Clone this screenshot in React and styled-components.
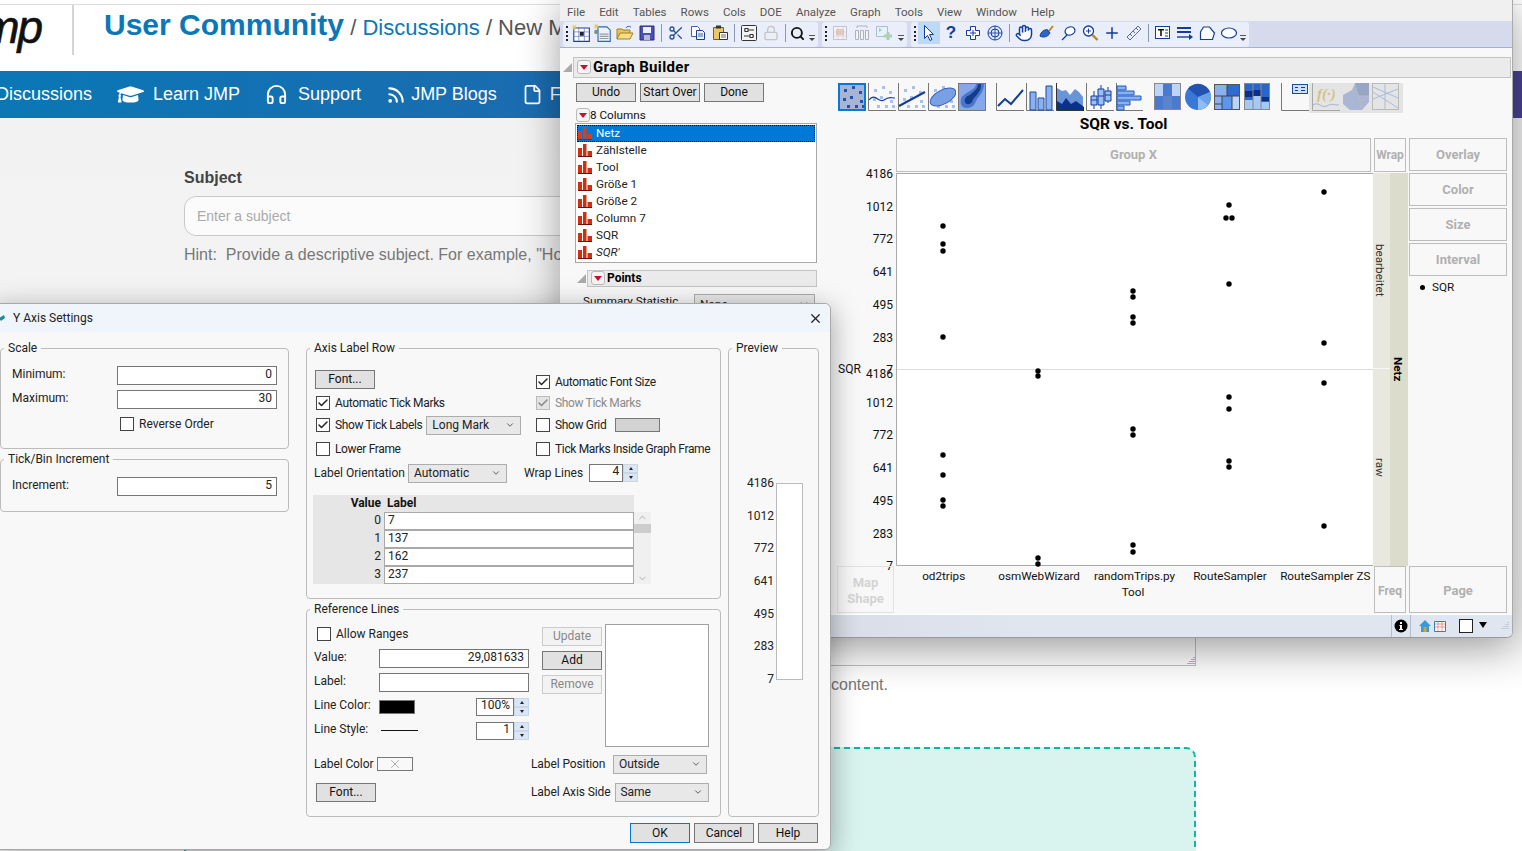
import React from "react";
import styled, { createGlobalStyle } from "styled-components";
import { Check, ChevronDown, ChevronUp, File, Hand, Headphones, Lock, Plus, Rss, Scissors, Search, X } from "lucide-react";
import { FaGraduationCap } from "react-icons/fa";

const GlobalStyle = createGlobalStyle`
  html, body { margin: 0; padding: 0; background: #fff; }
  * { box-sizing: border-box; }
`;

/* ---------- web page behind the windows ---------- */

const Desktop = styled.div`
  position: relative;
  width: 1522px;
  height: 851px;
  overflow: hidden;
  font-family: "Liberation Sans", Arial, sans-serif;
`;

const Header = styled.header`
  display: flex;
  height: 67px;
  margin-top: 4px;
  border-top: 1px solid #ddd;
  background: #fff;
`;

const LogoCell = styled.div`
  width: 74px;
  height: 50px;
  border-right: 2px solid #d4d4d4;
  overflow: hidden;
`;

const LogoText = styled.div`
  margin: -3px 0 0 -27px;
  font-size: 46px;
  line-height: 50px;
  font-style: italic;
  letter-spacing: -2px;
  color: #111;
  -webkit-text-stroke: 0.6px #111;
`;

const Crumbs = styled.div`
  margin: 1px 0 0 30px;
  white-space: nowrap;
  font-size: 22px;
  line-height: 38px;
  color: #555;
`;

const CrumbHome = styled.b`
  font-size: 30px;
  color: #0a78b8;
`;

const CrumbLink = styled.span`
  color: #0a78b8;
`;

const Nav = styled.nav`
  display: flex;
  align-items: center;
  height: 47px;
  margin-left: -4px;
  color: #fff;
  font-size: 18px;
  white-space: nowrap;
  background: linear-gradient(90deg, #0a77b5 0, #1a6cb0 540px, #4b4291 1526px);
`;

const NavItem = styled.span`
  display: flex;
  align-items: center;
  gap: ${(p) => p.$gap || 9}px;
  margin-right: 25px;
`;

const Main = styled.main`
  height: 733px;
  padding: 50px 0 0 184px;
  background: linear-gradient(#f2f2f2 0, #f5f5f5 520px, #fff 575px);
`;

const Column = styled.div`
  width: 1012px;
`;

const SubjectLabel = styled.div`
  font-size: 16px;
  line-height: 20px;
  font-weight: bold;
  color: #444;
`;

const SubjectInput = styled.input`
  display: block;
  width: 100%;
  height: 40px;
  margin-top: 8px;
  padding: 0 12px;
  border: 1px solid #c8c8c8;
  border-radius: 12px;
  background: #fbfbfb;
  font: 14px "Liberation Sans", Arial, sans-serif;
  &::placeholder { color: #aaa; opacity: 1; }
`;

const HintText = styled.div`
  margin-top: 9px;
  font-size: 16px;
  line-height: 19px;
  color: #777;
  white-space: pre;
`;

const EditorBox = styled.div`
  position: relative;
  height: 356px;
  margin-top: 46px;
  border: 1px solid #bbb;
`;

const ResizeGrip = styled.svg`
  position: absolute;
  right: 0;
  bottom: 0;
`;

const ContentHint = styled(HintText)`
  width: 704px;
  text-align: right;
`;

const TipBox = styled.div`
  height: 200px;
  margin-top: 53px;
  border: 2px dashed #12b5a5;
  border-radius: 10px;
  background: #d9f3ef;
`;

/* ---------- JMP window ---------- */

const JmpWindow = styled.section`
  position: absolute;
  left: 560px;
  top: 0;
  width: 953px;
  height: 638px;
  display: flex;
  flex-direction: column;
  overflow: hidden;
  background: #f8f8f8;
  border-right: 1px solid #aaa;
  border-bottom: 1px solid #999;
  border-bottom-right-radius: 6px;
  font-family: Roboto, "Liberation Sans", sans-serif;
  font-size: 11.7px;
  color: #111;
  box-shadow: 0 8px 40px rgba(0, 0, 0, 0.38);
`;

const MenuBar = styled.div`
  display: flex;
  gap: 14.1px;
  height: 21px;
  padding: 5px 0 0 7px;
  line-height: 14px;
  font-size: 11.5px;
  color: #555;
  background: #f0f0f0;
`;

const ToolBand = styled.div`
  display: flex;
  gap: 4px;
  height: 27px;
  padding: 1px 0 0 3px;
  background: #d5dbed;
  border-bottom: 1px solid #a9b1d2;
`;

const ToolGroup = styled.div`
  display: flex;
  align-items: center;
  width: ${(p) => p.$w}px;
  height: 25px;
  padding: 0 0 3px 2px;
  border-radius: 3px;
  background: #e9eefa;
`;

const Grip = styled.i`
  width: 2px;
  height: 15px;
  margin: 0 2px 0 1px;
  border-left: 2px dotted #222;
`;

const ToolSlot = styled.span`
  display: flex;
  align-items: center;
  justify-content: center;
  width: ${(p) => p.$w || 22}px;
  height: 22px;
  color: #1d4aa0;
  opacity: ${(p) => (p.$faded ? 0.35 : 1)};
  background: ${(p) => (p.$active ? "#bcd9f5" : "transparent")};
`;

const HelpGlyph = styled.b`
  font-size: 17px;
  color: #123d9c;
  font-family: "Liberation Sans", sans-serif;
`;

const ToolSep = styled.i`
  width: 1px;
  height: 18px;
  margin: 0 3px;
  background: #8d98b4;
`;

const Overflow = styled.i`
  width: 6px;
  height: 7px;
  margin: 10px 3px 0 auto;
  border-top: 1px solid #555;
  &::after {
    content: "";
    display: block;
    margin-top: 2px;
    border-left: 3px solid transparent;
    border-right: 3px solid transparent;
    border-top: 3px solid #444;
  }
`;

const OutlineRow = styled.div`
  display: flex;
  align-items: center;
  width: ${(p) => (p.$w ? `${p.$w}px` : "auto")};
  margin: ${(p) => p.$margin};
`;

const Twist = styled.i`
  flex: none;
  width: 0;
  height: 0;
  margin-right: 1px;
  border-left: 9px solid transparent;
  border-bottom: 9px solid #aaa;
`;

const OutlineBar = styled.div`
  display: flex;
  align-items: center;
  flex: 1;
  height: ${(p) => p.$h}px;
  padding: 0 0 1px 3px;
  border: 1px solid #c4c4c4;
  background: #ebebeb;
  font-weight: bold;
  font-size: ${(p) => p.$size}px;
  letter-spacing: ${(p) => p.$spacing || 0}px;
  color: #000;
`;

const RedMenu = styled.i`
  flex: none;
  display: flex;
  align-items: center;
  justify-content: center;
  width: 14px;
  height: 14px;
  margin-right: 2px;
  border: 1px solid #b9b9b9;
  border-radius: 3px;
  background: #f4f4f4;
  &::after {
    content: "";
    border-left: 4px solid transparent;
    border-right: 4px solid transparent;
    border-top: 5px solid #c8102e;
  }
`;

const Workspace = styled.div`
  display: flex;
  margin-top: 5px;
`;

const LeftPane = styled.div`
  flex: none;
  width: 278px;
  height: 240px;
  padding-left: 16px;
`;

const ButtonRow = styled.div`
  display: flex;
  gap: 4px;
`;

const ColumnsHead = styled.div`
  display: flex;
  align-items: center;
  height: 16px;
  margin-top: 5px;
  i { margin-right: 0; }
`;

const ListBox = styled.ul`
  width: 242px;
  height: 140px;
  margin: 0 0 0 -1px;
  padding: 1px;
  list-style: none;
  border: 1px solid #a8a8a8;
  background: #fff;
`;

const ListItem = styled.li`
  display: flex;
  align-items: center;
  gap: 4px;
  height: 17px;
  padding: 0 0 1px 1px;
  font-style: ${(p) => (p.$italic ? "italic" : "normal")};
  color: ${(p) => (p.$selected ? "#fff" : "#222")};
  background: ${(p) => (p.$selected ? "#0078d7" : "transparent")};
  outline: ${(p) => (p.$selected ? "1px dotted #111" : "none")};
  outline-offset: -1px;
`;

const SummaryRow = styled.div`
  display: grid;
  grid-template-columns: 111px 121px;
  margin: 7px 0 0 7px;
`;

const RightPane = styled.div`
  flex: 1;
  min-width: 0;
`;

const GraphIconRow = styled.div`
  display: flex;
  height: 30px;
`;

const GraphIconGroup = styled.div`
  display: flex;
  gap: 2px;
  margin-left: ${(p) => p.$left || 0}px;
  padding: ${(p) => (p.$off ? "0 3px" : 0)};
  height: ${(p) => (p.$off ? 30 : 28)}px;
  background: ${(p) => (p.$off ? "#e4e4e4" : "transparent")};
`;

const GraphIcon = styled.span`
  display: block;
  width: 28px;
  height: 28px;
  background: ${(p) => (p.$selected ? "#a8b4d4" : "transparent")};
  outline: ${(p) => (p.$selected ? "2px solid #0a78d4" : "none")};
  outline-offset: -2px;
  opacity: ${(p) => (p.$off ? 0.55 : 1)};
  svg { display: block; }
`;

const GraphTitle = styled.h2`
  margin: 0;
  height: 25px;
  padding: 3px 0 0 1px;
  width: 570px;
  text-align: center;
  font-size: 15.5px;
  line-height: 17px;
  font-weight: bold;
  color: #000;
`;

const GraphGrid = styled.div`
  display: grid;
  grid-template-columns: 58px 477px 35px 99px;
  grid-template-rows: 35px 393px 47px;
`;

const DropZone = styled.div`
  display: flex;
  align-items: center;
  justify-content: center;
  margin: ${(p) => p.$margin || 0};
  padding-top: ${(p) => p.$top || 0}px;
  height: ${(p) => (p.$h ? `${p.$h}px` : "auto")};
  border: 1px solid ${(p) => (p.$light ? "#e2e2e2" : "#bdbdbd")};
  color: ${(p) => (p.$light ? "#d4d4d4" : "#b0b0b0")};
  font-size: 13px;
  font-weight: bold;
  line-height: 16px;
  text-align: center;
`;

const NarrowZone = styled(DropZone)`
  font-size: 12px;
`;

const PlotSvg = styled.svg`
  grid-column: 1 / 3;
  grid-row: 2;
  overflow: visible;
  text {
    font-family: Roboto, "Liberation Sans", sans-serif;
    font-size: 12px;
    fill: #111;
  }
`;

const StripPane = styled.div`
  display: grid;
  grid-template-columns: 17px 18px;
  grid-template-rows: 196px 197px;
`;

const Strip = styled.div`
  display: flex;
  align-items: center;
  justify-content: center;
  padding-right: 3px;
  writing-mode: vertical-rl;
  background: #e8e8de;
  border-bottom: ${(p) => (p.$split ? "1px solid #f6f6f2" : 0)};
  color: #333;
`;

const GroupStrip = styled(Strip)`
  grid-column: 2;
  grid-row: 1 / 3;
  padding-right: 2px;
  background: #dcdccc;
  color: #000;
  font-weight: bold;
`;

const DropStack = styled.div`
  display: flex;
  flex-direction: column;
  gap: 2px;
  margin-left: 1px;
`;

const Legend = styled.div`
  display: flex;
  align-items: center;
  gap: 7px;
  margin: 1px 0 0 11px;
  line-height: 16px;
  &::before {
    content: "";
    width: 5px;
    height: 5px;
    border-radius: 50%;
    background: #000;
  }
`;

const CategoryRow = styled.div`
  padding-top: 2px;
  text-align: center;
  line-height: 16px;
  color: #111;
`;

const Categories = styled.div`
  display: grid;
  grid-template-columns: repeat(5, 1fr);
  white-space: nowrap;
`;

const ToolLabel = styled.div`
  padding-right: 3px;
`;

const StatusBar = styled.div`
  display: flex;
  align-items: center;
  justify-content: flex-end;
  height: 23px;
  margin: 1px 0 0 -10px;
  background: linear-gradient(90deg, #d9dde8, #e0e6f0 30%);
  border-top: 1px solid #fff;
`;

const StatusCell = styled.div`
  display: flex;
  align-items: center;
  gap: 2px;
  height: 100%;
  padding: 0 ${(p) => p.$right || 2}px 0 ${(p) => p.$left || 2}px;
  border-left: 1px solid #b5bccb;
`;

const ColorBox = styled.i`
  width: 14px;
  height: 14px;
  margin-left: 10px;
  border: 1px solid #222;
  background: #fff;
`;

const DownMark = styled.i`
  margin: 0 11px 2px 4px;
  border-left: 4px solid transparent;
  border-right: 4px solid transparent;
  border-top: 6px solid #000;
`;

/* ---------- Y Axis Settings dialog ---------- */

const Dialog = styled.section`
  position: absolute;
  left: -8px;
  top: 303px;
  width: 839px;
  height: 547px;
  display: flex;
  flex-direction: column;
  background: #f8f8f8;
  border: 1px solid #a8a8a8;
  border-radius: 6px;
  font-family: Roboto, "Liberation Sans", sans-serif;
  font-size: 12px;
  color: #222;
  box-shadow: 0 6px 28px rgba(0, 0, 0, 0.36);
`;

const DialogTitle = styled.div`
  display: flex;
  align-items: center;
  height: 28px;
  padding: 0 7px 0 6px;
  gap: 6px;
  background: #f0f5fb;
  border-radius: 6px 6px 0 0;
`;

const TitleText = styled.span`
  flex: 1;
`;

const DialogBody = styled.div`
  display: grid;
  grid-template-columns: 306px 422px 91px;
  height: 485px;
  padding: 8px 0 0 7px;
`;

const Stack = styled.div`
  display: flex;
  flex-direction: column;
  gap: 2px;
  width: ${(p) => p.$w}px;
`;

const Group = styled.fieldset`
  margin: 0;
  min-width: 0;
  height: ${(p) => p.$h}px;
  padding: ${(p) => p.$pad};
  border: 1px solid #bcbcbc;
  border-radius: 4px;
  legend {
    margin-left: ${(p) => p.$legend}px;
    padding: 0 4px;
    line-height: 16px;
    font-size: 12px;
    color: #222;
  }
`;

const FormRows = styled.div`
  display: grid;
  grid-template-columns: 105px 160px;
  row-gap: 5px;
  align-items: center;
  > span { margin-top: -3px; }
`;

const Field = styled.div`
  height: 19px;
  padding: 0 4px;
  border: 1px solid #767676;
  background: #fff;
  text-align: right;
  line-height: 15px;
  color: #222;
`;

const CheckLine = styled.label`
  display: flex;
  align-items: center;
  gap: 5px;
  margin: ${(p) => p.$margin || 0};
  white-space: nowrap;
  color: ${(p) => (p.$off ? "#8a8a8a" : "#222")};
`;

const Box = styled.span`
  flex: none;
  display: flex;
  align-items: center;
  justify-content: center;
  width: 14px;
  height: 14px;
  border: 1px solid ${(p) => (p.$off ? "#bbb" : "#444")};
  background: ${(p) => (p.$off ? "#e4e4e4" : "#fff")};
  color: ${(p) => (p.$off ? "#888" : "#222")};
`;

const WinButton = styled.button`
  flex: none;
  width: 60px;
  height: ${(p) => p.$h || 19}px;
  padding: 0;
  border: 1px solid ${(p) => (p.$primary ? "#0078d7" : p.$off ? "#ccc" : "#777")};
  background: ${(p) => (p.$off ? "#f2f2f2" : "#e1e1e1")};
  color: ${(p) => (p.$off ? "#888" : "#111")};
  font: 12px Roboto, "Liberation Sans", sans-serif;
  line-height: 15px;
`;

const Combo = styled.div`
  flex: none;
  display: flex;
  align-items: center;
  justify-content: space-between;
  width: ${(p) => p.$w}px;
  height: 19px;
  padding: 0 5px;
  border: 1px solid #adadad;
  background: #e8e8e8;
  color: #222;
  svg { color: #444; }
`;

const AxisGrid = styled.div`
  display: grid;
  grid-template-columns: 222px 1fr;
  grid-template-rows: 22px 21px 24px 24px 24px;
  margin-top: 14px;
  label { letter-spacing: -0.35px; }
`;

const AxisCell = styled.div`
  display: flex;
  align-items: center;
  gap: 4px;
  padding-left: ${(p) => p.$left || 0}px;
`;

const FontCell = styled(AxisCell)`
  align-items: flex-start;
  padding-left: 1px;
`;

const FontSizeCell = styled(AxisCell)`
  padding-top: 1px;
`;

const OrientRow = styled(AxisCell)`
  grid-column: 1 / 3;
  gap: 3px;
`;

const WrapLabel = styled.span`
  margin: 0 3px 0 14px;
`;

const Swatch = styled.i`
  width: ${(p) => p.$w}px;
  height: 14px;
  margin-left: ${(p) => p.$left || 0}px;
  display: flex;
  align-items: center;
  justify-content: center;
  border: 1px solid #777;
  background: ${(p) => p.$color};
  color: #777;
`;

const SpinWrap = styled.div`
  display: flex;
  width: ${(p) => p.$w}px;
`;

const SpinField = styled(Field)`
  flex: 1;
  height: 18px;
  padding: 0 3px;
  line-height: 13px;
`;

const SpinButtons = styled.div`
  display: flex;
  flex-direction: column;
  width: 15px;
  height: 18px;
`;

const SpinArrow = styled.i`
  flex: 1;
  display: flex;
  align-items: center;
  justify-content: center;
  background: #dbe6f5;
  border: 1px solid #c9d6e8;
  &::after {
    content: "";
    border-left: 2.5px solid transparent;
    border-right: 2.5px solid transparent;
    ${(p) => (p.$down ? "border-top: 3px solid #223;" : "border-bottom: 3px solid #223;")}
  }
`;

const TableWrap = styled.div`
  display: flex;
  margin: 10px 0 0 -1px;
`;

const LabelTable = styled.div`
  display: grid;
  grid-template-columns: 71px 250px;
  width: 321px;
  background: #e6e6e6;
`;

const HeadCell = styled.div`
  height: 17px;
  line-height: 17px;
  padding: 0 3px;
  font-weight: bold;
  color: #111;
  text-align: ${(p) => (p.$right ? "right" : "left")};
`;

const RowNum = styled.div`
  height: 18px;
  padding-right: 3px;
  text-align: right;
  line-height: 17px;
`;

const RowValue = styled.div`
  height: 18px;
  padding-left: 3px;
  line-height: 14px;
  background: #fff;
  border: 1px solid #a9a9a9;
`;

const ScrollBar = styled.div`
  display: flex;
  flex-direction: column;
  align-items: center;
  width: 17px;
  margin-top: 17px;
  background: #f0f0f0;
  color: #aaa;
`;

const ScrollThumb = styled.i`
  width: 100%;
  height: 9px;
  margin-top: 1px;
  background: #cdcdcd;
`;

const ScrollGap = styled.i`
  flex: 1;
`;

const RefTop = styled.div`
  display: grid;
  grid-template-columns: 225px 60px 104px;
  column-gap: 3px;
`;

const RefFields = styled.div`
  display: grid;
  grid-template-columns: 65px 150px;
  grid-template-rows: 30px 23px 25px 23px 25px;
  align-items: center;
  > span { margin-top: -3px; }
`;

const RefButtons = styled.div`
  display: flex;
  flex-direction: column;
  gap: 5px;
  padding-top: 10px;
`;

const RefList = styled.div`
  height: 123px;
  margin-top: 7px;
  border: 1px solid #a0a0a0;
  background: #fff;
`;

const AllowCell = styled.div`
  grid-column: 1 / 3;
`;

const RightSpin = styled.div`
  display: flex;
  align-items: center;
  justify-content: space-between;
`;

const StyleLine = styled.i`
  width: 37px;
  height: 1px;
  margin-left: 2px;
  background: #111;
`;

const RefBottom = styled.div`
  display: grid;
  grid-template-columns: 217px 176px;
  grid-template-rows: 28px 28px;
  margin-top: 3px;
`;

const RefCell = styled.div`
  display: flex;
  align-items: center;
  justify-content: ${(p) => (p.$between ? "space-between" : "flex-start")};
  gap: 4px;
  padding-left: ${(p) => p.$left || 0}px;
  white-space: nowrap;
  letter-spacing: -0.1px;
`;

const PreviewPlot = styled.div`
  display: flex;
  justify-content: flex-end;
  padding: 119px 15px 0 0;
`;

const PreviewTicks = styled.div`
  display: flex;
  flex-direction: column;
  justify-content: space-between;
  height: 212px;
  margin-right: 2px;
  text-align: right;
  line-height: 16px;
`;

const PreviewBar = styled.div`
  width: 27px;
  height: 197px;
  margin-top: 8px;
  border: 1px solid #bbb;
  background: #fff;
`;

const Footer = styled.div`
  display: flex;
  justify-content: flex-end;
  gap: 4px;
  padding: 6px 12px 0 0;
`;

/* ---------- drawn icons ---------- */

const NewTableIcon = () => (
  <svg width="20" height="20" viewBox="0 0 18 18">
    <path d="M2.500 4.500h14v12h-14z" fill="#fff" stroke="#1c3c8c" />
    <path d="M2 8h14M2 12h14M7 4v12M12 4v12" stroke="#6d86c4" strokeWidth=".7" />
    <rect x="8" y="8" width="3.500" height="3.500" fill="#222" />
    <path d="M1 1l2 2 2-2-1 3 2 1H3L2 7 2 5 0 4.500 2 4z" fill="#f2c838" />
  </svg>
);
const NewScriptIcon = () => (
  <svg width="20" height="20" viewBox="0 0 18 18">
    <path d="M4.500 3.500h8l3 3v10h-11z" fill="#eaf2fb" stroke="#2c67b8" />
    <path d="M6 10h8M6 12h8M6 14h8" stroke="#9a9a9a" />
    <circle cx="3" cy="8" r="2" fill="#8a8a8a" />
    <path d="M1 0l2 2 2-2-1 3 2 1H3L2 6 2 4 0 3.500 2 3z" fill="#f2c838" />
  </svg>
);
const OpenIcon = () => (
  <svg width="18" height="18" viewBox="0 0 18 18">
    <path d="M1 15V5h5l1 1h7v3" fill="#e8c55a" stroke="#a47f1d" />
    <path d="M1 15l3-6h13l-3 6z" fill="#f6dd8a" stroke="#a47f1d" />
    <path d="M10 4c1-2 3-2 5-1" fill="none" stroke="#2c67b8" />
  </svg>
);
const SaveIcon = () => (
  <svg width="18" height="18" viewBox="0 0 18 18">
    <path d="M2 2h14v14H2z" fill="#4a52b0" stroke="#2a2e78" />
    <rect x="5" y="3" width="8" height="6" fill="#eef" />
    <rect x="6" y="11" width="6" height="5" fill="#b8bcd8" />
  </svg>
);
const CopyIcon = () => (
  <svg width="18" height="18" viewBox="0 0 18 18">
    <path d="M2.500 2.500h6l2 2v8h-8z" fill="#fff" stroke="#3a66b0" />
    <path d="M7.500 6.500h6l2 2v7h-8z" fill="#eaf2fb" stroke="#1c3c8c" />
    <path d="M9 10h5M9 12h5" stroke="#3a66b0" />
  </svg>
);
const PasteIcon = () => (
  <svg width="18" height="18" viewBox="0 0 18 18">
    <path d="M2.500 3.500h10v12h-10z" fill="#ecc765" stroke="#7b5f18" />
    <rect x="5" y="1.500" width="5" height="3" fill="#333" />
    <path d="M8.500 8.500h8v7h-8z" fill="#fff" stroke="#333" />
    <path d="M10 11h5M10 13h5" stroke="#666" />
  </svg>
);
const PropsIcon = () => (
  <svg width="18" height="18" viewBox="0 0 18 18">
    <rect x="1.500" y="1.500" width="15" height="15" rx="1" fill="#f4f4f4" stroke="#333" />
    <path d="M4 6h10M4 12h10" stroke="#333" />
    <rect x="5" y="4.500" width="3" height="3" fill="#fff" stroke="#333" />
    <rect x="10" y="10.500" width="3" height="3" fill="#fff" stroke="#333" />
  </svg>
);
const FadedTableIcon = () => (
  <svg width="18" height="18" viewBox="0 0 18 18">
    <path d="M2.500 2.500h13v13h-13z" fill="#fff" stroke="#777" />
    <rect x="5" y="5" width="8" height="6" fill="#d89048" />
    <path d="M2 8h14M2 12h14M7 2v14M12 2v14" stroke="#d06060" strokeWidth=".6" />
  </svg>
);
const FadedBarsIcon = () => (
  <svg width="18" height="18" viewBox="0 0 18 18">
    <path d="M2.500 6.500h3v9h-3zM7.500 6.500h3v9h-3zM12.500 6.500h3v9h-3z" fill="#fff" stroke="#444" />
    <path d="M4 4V2h10v2" fill="none" stroke="#444" />
  </svg>
);
const FadedPlusIcon = () => (
  <svg width="18" height="18" viewBox="0 0 18 18">
    <path d="M1.500 2.500h11v10h-11z" fill="#dff" stroke="#468" />
    <path d="M4 4l3 2-3 2z" fill="#284" />
    <path d="M13 8v8M9 12h8" stroke="#3a9a3a" strokeWidth="3" />
  </svg>
);
const ArrowIcon = () => (
  <svg width="16" height="18" viewBox="0 0 16 18">
    <path d="M3.500 1.500v13l3-3 2.500 5 2-1-2.500-5h4z" fill="#fff" stroke="#123d9c" />
  </svg>
);
const CrossIcon = () => (
  <svg width="18" height="18" viewBox="0 0 18 18" fill="#fff" stroke="#123d9c">
    <path d="M6.500 2.500h5v4h4v5h-4v4h-5v-4h-4v-5h4z" />
    <path d="M9 6v6M6 9h6" />
  </svg>
);
const TargetIcon = () => (
  <svg width="18" height="18" viewBox="0 0 18 18" fill="none" stroke="#123d9c">
    <circle cx="9" cy="9" r="7" fill="#dfe8f8" />
    <circle cx="9" cy="9" r="4" />
    <path d="M9 2v14M2 9h14" strokeWidth=".8" />
  </svg>
);
const BrushIcon = () => (
  <svg width="18" height="18" viewBox="0 0 18 18">
    <path d="M11 6c-3-1-7 1-8 6 3 2 8 1 10-3z" fill="#2c67c8" stroke="#123d9c" />
    <path d="M12 7l4-5" stroke="#b58a1c" strokeWidth="2" />
  </svg>
);
const LassoIcon = () => (
  <svg width="18" height="18" viewBox="0 0 18 18" fill="none" stroke="#123d9c" strokeWidth="1.300">
    <ellipse cx="11" cy="7" rx="5" ry="4" transform="rotate(-20 11 7)" fill="#fff" />
    <path d="M8 11l-5 5" />
  </svg>
);
const ZoomIcon = () => (
  <svg width="18" height="18" viewBox="0 0 18 18">
    <circle cx="7.500" cy="7" r="5" fill="#fff" stroke="#123d9c" strokeWidth="1.300" />
    <path d="M5 7h5M7.500 4.500v5" stroke="#123d9c" />
    <path d="M11.500 11l5 5" stroke="#b58a1c" strokeWidth="2.400" />
  </svg>
);
const RulerIcon = () => (
  <svg width="18" height="18" viewBox="0 0 18 18">
    <path d="M2 13L13 2l3 3L5 16z" fill="#e9eefa" stroke="#5a6c9c" />
    <path d="M5 10l2 2M8 7l2 2M11 4l2 2" stroke="#5a6c9c" />
  </svg>
);
const TextBoxIcon = () => (
  <svg width="18" height="18" viewBox="0 0 18 18">
    <rect x="1.500" y="2.500" width="14" height="12" fill="#fff" stroke="#123d9c" />
    <path d="M4 5h6v1.500H7.800v5.500H6.200V6.500H4z" fill="#111" />
    <path d="M11 6h3M11 9h3M11 12h3" stroke="#123d9c" />
  </svg>
);
const LinesIcon = () => (
  <svg width="18" height="18" viewBox="0 0 18 18">
    <path d="M1 4h14M1 8h14" stroke="#123d9c" strokeWidth="2" />
    <path d="M1 13h13" stroke="#123d9c" strokeWidth="1.400" />
    <path d="M13 10l4 3-4 3z" fill="#123d9c" />
  </svg>
);
const PolygonIcon = () => (
  <svg width="18" height="18" viewBox="0 0 18 18">
    <path d="M2.500 15.500V8l3-5h6l5 6-2 6.500z" fill="#fff" stroke="#123d9c" strokeWidth="1.200" />
  </svg>
);
const EllipseIcon = () => (
  <svg width="18" height="18" viewBox="0 0 18 18">
    <ellipse cx="9" cy="9" rx="7.500" ry="5" fill="#fff" stroke="#123d9c" strokeWidth="1.200" />
  </svg>
);

const ColumnIcon = ({ light }) => (
  <svg width="14" height="14" viewBox="0 0 14 14">
    <path d="M0 5h4v8H0zM5 1h3.500v12H5zM9.500 8H14v5H9.500z" fill={light ? "#e03a1c" : "#d03010"} />
    <path d="M0 13.500h14" stroke={light ? "#a02000" : "#701000"} />
  </svg>
);

const Axes = () => <path d="M.5 0v27.500H28" fill="none" stroke="#777" />;
const squares = [[6, 6], [14, 3], [21, 8], [5, 15], [12, 13], [22, 17], [9, 22], [17, 22], [24, 22]];
const Squares = ({ fill = "#a8c0ea" }) =>
  squares.map(([x, y]) => <rect key={`${x}-${y}`} x={x} y={y} width="3" height="3" fill={fill} />);

const graphIcons = {
  points: (
    <>
      <rect x=".5" y=".5" width="27" height="27" fill="none" stroke="#888" />
      <Squares fill="#2450b0" />
    </>
  ),
  smooth: (<><Axes /><Squares /><path d="M1 17c6-8 10 4 15 0s7-2 11-2" fill="none" stroke="#123d9c" strokeWidth="1.200" /></>),
  fit: (<><Axes /><Squares /><path d="M1 23L27 9" fill="none" stroke="#123d9c" strokeWidth="2" /></>),
  ellipse: (<><Axes /><Squares /><ellipse cx="15" cy="14" rx="14" ry="7" transform="rotate(-28 15 14)" fill="#7aa0e4" stroke="#2f5fc8" /></>),
  contour: (
    <>
      <rect x=".5" y=".5" width="27" height="27" fill="#86a8ea" stroke="#777" />
      <path d="M18 1h8c0 7-4 11-7 15-2 5-4 9-10 9-6 0-7-5-6-9 1-4 6-6 9-8 3-2 6-4 6-7z" fill="#4a76cc" />
      <path d="M20 1c0 5-5 8-8 11-4 1-6 4-5 7 1 3 5 3 7 0 1-4 5-6 8-12 1-2 1-4 1-6z" fill="#123d8c" />
    </>
  ),
  line: (<><Axes /><path d="M2 23l7-7 6 5L27 7" fill="none" stroke="#123d9c" strokeWidth="2" /></>),
  bar: (<><Axes /><path d="M4 9h6v18H4zM12 15h6v12h-6zM20 3h6v24h-6z" fill="#8ab0f0" stroke="#1d4aa0" /></>),
  area: (
    <>
      <path d="M1 5l5 3 4-1 4 5 5-6 4 3 4 5v13H1z" fill="#6a94d8" />
      <path d="M1 18l5 3 4-6 5 6 5-3 8 6v3H1z" fill="#0c3188" />
      <path d="M.5 0v27.500H28" fill="none" stroke="#333" />
    </>
  ),
  box: (
    <>
      <Axes />
      <path d="M8 8v18M15 2v24M22 4v16" stroke="#123d9c" />
      <path d="M5 13h6v9H5zM12 6h6v16h-6zM19 8h6v10h-6z" fill="#9cc0f4" stroke="#123d9c" />
      <path d="M5 17h6M12 13h6M19 12h6" stroke="#123d9c" />
    </>
  ),
  histogram: (
    <>
      <path d="M.5 0v27.500H27" fill="none" stroke="#777" />
      <path d="M1 3h9v4H1zM1 8h17v4H1zM1 13h24v4H1zM1 18h13v4H1zM1 23h7v4H1z" fill="#8ab0f0" stroke="#1d5ac0" />
    </>
  ),
  heat: (
    <>
      <rect x="0" y="0" width="27" height="27" fill="#a8c4f0" />
      <path d="M9 0h9v13H9zM0 13h9v14H0zM18 13h9v14h-9z" fill="#4a7ad0" />
      <path d="M0 0h9v13H0zM18 0h9v13h-9z" fill="#bcd4f8" />
      <path d="M9 13h9v14H9z" fill="#2a5ab0" opacity=".6" />
      <rect x=".5" y=".5" width="26" height="26" fill="none" stroke="#888" />
    </>
  ),
  pie: (
    <>
      <circle cx="14" cy="14" r="13" fill="#3a78d8" />
      <path d="M14 14L4 5.500A13 13 0 0 1 26 9z" fill="#2452b0" />
      <path d="M14 14l12-5a13 13 0 0 1-2 13z" fill="#6aa0e8" />
      <path d="M14 14l10 8a13 13 0 0 1-10 5z" fill="#90bcf4" />
    </>
  ),
  tree: (
    <>
      <rect x=".5" y="1.500" width="25" height="25" fill="#8ab0f0" stroke="#555" />
      <path d="M13 2h12v11H13z" fill="#2f6ad0" />
      <path d="M8 13h10v13H8z" fill="#5a96f0" />
      <path d="M18 13h7v13h-7z" fill="#b8d4fa" />
      <path d="M1 13h24M13 2v11M8 13v13M18 13v13M1 21h7" stroke="#444" />
    </>
  ),
  mosaic: (
    <>
      <rect x=".5" y=".5" width="25" height="26" fill="#a8c8f4" stroke="#888" />
      <path d="M1 1h8v16H1zM9 1h8v10H9zM17 1h8v18h-8z" fill="#2a66c8" />
      <path d="M1 8h8v6H1zM9 7h8v6H9zM17 14h8v4h-8z" fill="#0c2f88" />
      <path d="M9 0v27M17 0v27" stroke="#888" />
    </>
  ),
  caption: (
    <>
      <path d="M.5 0v27.500H28" fill="none" stroke="#777" />
      <rect x="11.500" y="1.500" width="15" height="9" fill="#cfe0fa" stroke="#1d4aa0" />
      <path d="M14 4.500h3M14 7.500h3M20 4.500h4M20 7.500h4" stroke="#123d9c" />
    </>
  ),
  formula: (
    <>
      <Axes />
      <text x="5" y="16" fontFamily="Liberation Serif, serif" fontStyle="italic" fontWeight="bold" fontSize="15" fill="#c8a838">f(·)</text>
      <path d="M1 22c6-4 9 4 14 1s7-1 12-1" fill="none" stroke="#6a8cc8" />
    </>
  ),
  map: (
    <>
      <path d="M1 12l9-5 3-7h14v19l-7 8H8l-7-6z" fill="#7a94c8" />
      <path d="M13 0h14v13H17z" fill="#5a74a8" />
      <path d="M10 7l7 6 10 0M17 13l3 14" fill="none" stroke="#999" />
    </>
  ),
  parallel: (
    <>
      <rect x=".5" y=".5" width="26" height="26" fill="none" stroke="#999" />
      <path d="M1 4l25 11M1 16L26 6M1 9l25 16M13 0v27" fill="none" stroke="#7a9cd8" />
    </>
  ),
};

const GI = ({ name, selected, off }) => (
  <GraphIcon $selected={selected} $off={off}>
    <svg width="28" height="28" viewBox="0 0 28 28">{graphIcons[name]}</svg>
  </GraphIcon>
);

/* ---------- data ---------- */

const menus = ["File", "Edit", "Tables", "Rows", "Cols", "DOE", "Analyze", "Graph", "Tools", "View", "Window", "Help"];
const columnNames = ["Netz", "Zählstelle", "Tool", "Größe 1", "Größe 2", "Column 7", "SQR"];
const tickLabels = ["4186", "1012", "772", "641", "495", "283", "7"];
const tools = ["od2trips", "osmWebWizard", "randomTrips.py", "RouteSampler", "RouteSampler ZS"];
const dots = [
  [943, 226], [943, 244], [943, 251], [943, 337], [943, 455], [943, 475], [943, 500], [943, 506],
  [1038, 371], [1038, 376], [1038, 558], [1038, 564],
  [1133, 291], [1133, 297], [1133, 317], [1133, 323], [1133, 429], [1133, 435], [1133, 545], [1133, 552],
  [1229, 205], [1226, 218], [1232, 218], [1229, 284], [1229, 397], [1229, 409], [1229, 461], [1229, 467],
  [1324, 192], [1324, 343], [1324, 383], [1324, 526],
];
const axisRows = [["0", "7"], ["1", "137"], ["2", "162"], ["3", "237"]];

const PLOT_LEFT = 838;
const PLOT_TOP = 173;

const Check14 = ({ checked, off }) => (
  <Box $off={off}>{checked && <Check size={12} strokeWidth={3} />}</Box>
);

const Spin = ({ value, w = 53 }) => (
  <SpinWrap $w={w}>
    <SpinField>{value}</SpinField>
    <SpinButtons>
      <SpinArrow />
      <SpinArrow $down />
    </SpinButtons>
  </SpinWrap>
);

const GraphPlot = () => (
  <PlotSvg width="535" height="393" viewBox="0 0 535 393">
    <rect x="58.500" y=".5" width="476" height="392" fill="#fff" />
    <path d="M58 196.500h477" stroke="#ddd" />
    <path d="M58.500 0v392.500H535M58 .5h477" fill="none" stroke="#aaa" />
    {tickLabels.map((t, i) => (
      <text key={`a${t}`} x="55" y={5 + i * 32.7} textAnchor="end">{t}</text>
    ))}
    {tickLabels.map((t, i) => (
      <text key={`b${t}`} x="55" y={205 + i * 32.7 - (i === 0 ? 0 : 4)} textAnchor="end">{t}</text>
    ))}
    <text x="0" y="200">SQR</text>
    {dots.map(([x, y]) => (
      <circle key={`${x}-${y}`} cx={x - PLOT_LEFT} cy={y - PLOT_TOP} r="2.700" fill="#000" />
    ))}
  </PlotSvg>
);

const App = () => (
  <Desktop>
    <GlobalStyle />

    <Header>
      <LogoCell>
        <LogoText>jmp</LogoText>
      </LogoCell>
      <Crumbs>
        <CrumbHome>User Community</CrumbHome> / <CrumbLink>Discussions</CrumbLink> / New Message
      </Crumbs>
    </Header>
    <Nav>
      <NavItem>Discussions</NavItem>
      <NavItem><FaGraduationCap size={27} />Learn JMP</NavItem>
      <NavItem $gap={10}><Headphones size={23} />Support</NavItem>
      <NavItem $gap={5}><Rss size={20} strokeWidth={2.5} />JMP Blogs</NavItem>
      <NavItem $gap={7}><File size={21} />File Exchange</NavItem>
    </Nav>
    <Main>
      <Column>
        <SubjectLabel>Subject</SubjectLabel>
        <SubjectInput placeholder="Enter a subject" readOnly />
        <HintText>Hint:  Provide a descriptive subject. For example, "How do I remove a reference line?"</HintText>
        <EditorBox>
          <ResizeGrip width="9" height="9" viewBox="0 0 9 9">
            <path d="M8 1v1M6 3v1M8 3v1M4 5v1M6 5v1M8 5v1M2 7v1M4 7v1M6 7v1M8 7v1" stroke="#8a5a9a" />
          </ResizeGrip>
        </EditorBox>
        <ContentHint>Hint:  Use the body of the message to describe your content.</ContentHint>
        <TipBox />
      </Column>
    </Main>

    <JmpWindow>
      <MenuBar>
        {menus.map((m) => <span key={m}>{m}</span>)}
      </MenuBar>
      <ToolBand>
        <ToolGroup $w={255}>
          <Grip />
          <ToolSlot><NewTableIcon /></ToolSlot>
          <ToolSlot><NewScriptIcon /></ToolSlot>
          <ToolSlot><OpenIcon /></ToolSlot>
          <ToolSlot><SaveIcon /></ToolSlot>
          <ToolSep />
          <ToolSlot><Scissors size={16} color="#2c4f9c" /></ToolSlot>
          <ToolSlot><CopyIcon /></ToolSlot>
          <ToolSlot><PasteIcon /></ToolSlot>
          <ToolSep />
          <ToolSlot><PropsIcon /></ToolSlot>
          <ToolSlot><Lock size={16} color="#c4c4c4" /></ToolSlot>
          <ToolSep />
          <ToolSlot $w={17}><Search size={15} color="#111" strokeWidth={3} /></ToolSlot>
          <Overflow />
        </ToolGroup>
        <ToolGroup $w={85}>
          <Grip />
          <ToolSlot $faded><FadedTableIcon /></ToolSlot>
          <ToolSlot $faded><FadedBarsIcon /></ToolSlot>
          <ToolSlot $faded><FadedPlusIcon /></ToolSlot>
          <Overflow />
        </ToolGroup>
        <ToolGroup $w={338}>
          <Grip />
          <ToolSlot $active><ArrowIcon /></ToolSlot>
          <ToolSlot><HelpGlyph>?</HelpGlyph></ToolSlot>
          <ToolSlot><CrossIcon /></ToolSlot>
          <ToolSlot><TargetIcon /></ToolSlot>
          <ToolSep />
          <ToolSlot><Hand size={18} color="#123d9c" fill="#fff" /></ToolSlot>
          <ToolSlot><BrushIcon /></ToolSlot>
          <ToolSlot><LassoIcon /></ToolSlot>
          <ToolSlot><ZoomIcon /></ToolSlot>
          <ToolSlot><Plus size={18} color="#123d9c" strokeWidth={2} /></ToolSlot>
          <ToolSlot><RulerIcon /></ToolSlot>
          <ToolSep />
          <ToolSlot><TextBoxIcon /></ToolSlot>
          <ToolSlot><LinesIcon /></ToolSlot>
          <ToolSlot><PolygonIcon /></ToolSlot>
          <ToolSlot><EllipseIcon /></ToolSlot>
          <Overflow />
        </ToolGroup>
      </ToolBand>

      <OutlineRow $margin="9px 1px 0 3px">
        <Twist />
        <OutlineBar $h={21} $size={15} $spacing={0.35}>
          <RedMenu />
          Graph Builder
        </OutlineBar>
      </OutlineRow>

      <Workspace>
        <LeftPane>
          <ButtonRow>
            <WinButton>Undo</WinButton>
            <WinButton>Start Over</WinButton>
            <WinButton>Done</WinButton>
          </ButtonRow>
          <ColumnsHead>
            <RedMenu />
            8 Columns
          </ColumnsHead>
          <ListBox>
            {columnNames.map((name, i) => (
              <ListItem key={name} $selected={i === 0}>
                <ColumnIcon light={i === 0} />
                {name}
              </ListItem>
            ))}
            <ListItem $italic>
              <ColumnIcon />
              SQR'
            </ListItem>
          </ListBox>
          <OutlineRow $w={240} $margin="7px 0 0 1px">
            <Twist />
            <OutlineBar $h={17} $size={12}>
              <RedMenu />
              Points
            </OutlineBar>
          </OutlineRow>
          <SummaryRow>
            <span>Summary Statistic</span>
            <Combo $w={121}>None<ChevronDown size={10} /></Combo>
          </SummaryRow>
        </LeftPane>

        <RightPane>
          <GraphIconRow>
            <GraphIconGroup>
              <GI name="points" selected />
              <GI name="smooth" />
              <GI name="fit" />
              <GI name="ellipse" />
              <GI name="contour" />
            </GraphIconGroup>
            <GraphIconGroup $left={10}>
              <GI name="line" />
              <GI name="bar" />
              <GI name="area" />
              <GI name="box" />
              <GI name="histogram" />
            </GraphIconGroup>
            <GraphIconGroup $left={10}>
              <GI name="heat" />
              <GI name="pie" />
              <GI name="tree" />
              <GI name="mosaic" />
            </GraphIconGroup>
            <GraphIconGroup $left={9}>
              <GI name="caption" />
            </GraphIconGroup>
            <GraphIconGroup $off>
              <GI name="formula" off />
              <GI name="map" off />
              <GI name="parallel" off />
            </GraphIconGroup>
          </GraphIconRow>
          <GraphTitle>SQR vs. Tool</GraphTitle>
          <GraphGrid>
            <span />
            <DropZone $margin="0 2px 1px 0">Group X</DropZone>
            <NarrowZone $margin="0 2px 1px 1px">Wrap</NarrowZone>
            <DropZone $margin="0 0 2px 1px">Overlay</DropZone>

            <GraphPlot />
            <StripPane>
              <Strip $split>bearbeitet</Strip>
              <GroupStrip>Netz</GroupStrip>
              <Strip>raw</Strip>
            </StripPane>
            <DropStack>
              <DropZone $h={33}>Color</DropZone>
              <DropZone $h={33}>Size</DropZone>
              <DropZone $h={33}>Interval</DropZone>
              <Legend>SQR</Legend>
            </DropStack>

            <DropZone $light $top={3} $margin="0 2px 0 -1px">Map<br />Shape</DropZone>
            <CategoryRow>
              <Categories>
                {tools.map((t) => <span key={t}>{t}</span>)}
              </Categories>
              <ToolLabel>Tool</ToolLabel>
            </CategoryRow>
            <NarrowZone $top={3} $margin="0 2px 0 1px">Freq</NarrowZone>
            <DropZone $top={3} $margin="0 0 0 1px">Page</DropZone>
          </GraphGrid>
          <StatusBar>
            <StatusCell>
              <svg width="14" height="14" viewBox="0 0 14 14">
                <circle cx="7" cy="7" r="6.500" fill="#000" />
                <path d="M6 3h2v2H6zM5.500 6H8v4h1v1H5v-1h1V7h-.5z" fill="#fff" />
              </svg>
            </StatusCell>
            <StatusCell $left={7} $right={0}>
              <svg width="14" height="14" viewBox="0 0 14 14">
                <path d="M7 1L1 7h2v6h8V7h2z" fill="#3a9ad8" />
                <rect x="5.500" y="8" width="3" height="5" fill="#e0a020" />
              </svg>
              <svg width="13" height="13" viewBox="0 0 13 13">
                <path d="M.5 1.500h11v10H.5z" fill="#fff" stroke="#3a7ac8" />
                <path d="M1 4h10M1 7h10M4 1v10M8 1v10" stroke="#d06060" strokeWidth=".6" />
              </svg>
              <ColorBox />
              <DownMark />
              <svg width="10" height="10" viewBox="0 0 10 10">
                <path d="M8 1v1M6 3v1M8 3v1M4 5v1M6 5v1M8 5v1M2 7v1M4 7v1M6 7v1M8 7v1" stroke="#a8b0c4" />
              </svg>
            </StatusCell>
          </StatusBar>
        </RightPane>
      </Workspace>
    </JmpWindow>

    <Dialog>
      <DialogTitle>
        <svg width="8" height="8" viewBox="0 0 8 8">
          <path d="M0 4l5-3 1 3-4 3z" fill="#1f8a9a" />
        </svg>
        <TitleText>Y Axis Settings</TitleText>
        <X size={15} color="#222" />
      </DialogTitle>
      <DialogBody>
        <Stack $w={289}>
          <Group $h={109} $pad="10px 0 0 11px" $legend={-8}>
            <legend>Scale</legend>
            <FormRows>
              <span>Minimum:</span>
              <Field>0</Field>
              <span>Maximum:</span>
              <Field>30</Field>
              <i />
              <CheckLine $margin="3px 0 0 3px"><Check14 />Reverse Order</CheckLine>
            </FormRows>
          </Group>
          <Group $h={61} $pad="10px 0 0 11px" $legend={-8}>
            <legend>Tick/Bin Increment</legend>
            <FormRows>
              <span>Increment:</span>
              <Field>5</Field>
            </FormRows>
          </Group>
        </Stack>

        <Stack $w={415}>
          <Group $h={259} $pad="0 0 0 7px" $legend={-4}>
            <legend>Axis Label Row</legend>
            <AxisGrid>
              <FontCell><WinButton>Font...</WinButton></FontCell>
              <FontSizeCell><CheckLine><Check14 checked />Automatic Font Size</CheckLine></FontSizeCell>
              <AxisCell $left={2}><CheckLine><Check14 checked />Automatic Tick Marks</CheckLine></AxisCell>
              <AxisCell><CheckLine $off><Check14 checked off />Show Tick Marks</CheckLine></AxisCell>
              <AxisCell $left={2}>
                <CheckLine><Check14 checked />Show Tick Labels</CheckLine>
                <Combo $w={95}>Long Mark<ChevronDown size={10} /></Combo>
              </AxisCell>
              <AxisCell>
                <CheckLine><Check14 />Show Grid</CheckLine>
                <Swatch $w={45} $left={5} $color="#d3d3d3" />
              </AxisCell>
              <AxisCell $left={2}><CheckLine><Check14 />Lower Frame</CheckLine></AxisCell>
              <AxisCell><CheckLine><Check14 />Tick Marks Inside Graph Frame</CheckLine></AxisCell>
              <OrientRow>
                Label Orientation
                <Combo $w={99}>Automatic<ChevronDown size={10} /></Combo>
                <WrapLabel>Wrap Lines</WrapLabel>
                <Spin value="4" w={49} />
              </OrientRow>
            </AxisGrid>
            <TableWrap>
              <LabelTable>
                <HeadCell $right>Value</HeadCell>
                <HeadCell>Label</HeadCell>
                {axisRows.map(([n, v]) => (
                  <React.Fragment key={n}>
                    <RowNum>{n}</RowNum>
                    <RowValue>{v}</RowValue>
                  </React.Fragment>
                ))}
              </LabelTable>
              <ScrollBar>
                <ChevronUp size={11} />
                <ScrollThumb />
                <ScrollGap />
                <ChevronDown size={11} />
              </ScrollBar>
            </TableWrap>
          </Group>

          <Group $h={216} $pad="0 0 0 7px" $legend={-4}>
            <legend>Reference Lines</legend>
            <RefTop>
              <RefFields>
                <AllowCell>
                  <CheckLine $margin="4px 0 0 3px"><Check14 />Allow Ranges</CheckLine>
                </AllowCell>
                <span>Value:</span>
                <Field>29,081633</Field>
                <span>Label:</span>
                <Field />
                <span>Line Color:</span>
                <RightSpin>
                  <Swatch $w={36} $color="#000" />
                  <Spin value="100%" />
                </RightSpin>
                <span>Line Style:</span>
                <RightSpin>
                  <StyleLine />
                  <Spin value="1" />
                </RightSpin>
              </RefFields>
              <RefButtons>
                <WinButton $off>Update</WinButton>
                <WinButton>Add</WinButton>
                <WinButton $off>Remove</WinButton>
              </RefButtons>
              <RefList />
            </RefTop>
            <RefBottom>
              <RefCell>
                Label Color
                <Swatch $w={36} $color="#f8f8f8"><X size={14} strokeWidth={1} /></Swatch>
              </RefCell>
              <RefCell $between>
                Label Position
                <Combo $w={94}>Outside<ChevronDown size={10} /></Combo>
              </RefCell>
              <RefCell $left={2}><WinButton>Font...</WinButton></RefCell>
              <RefCell $between>
                Label Axis Side
                <Combo $w={94}>Same<ChevronDown size={10} /></Combo>
              </RefCell>
            </RefBottom>
          </Group>
        </Stack>

        <Group $h={477} $pad="0" $legend={3}>
          <legend>Preview</legend>
          <PreviewPlot>
            <PreviewTicks>
              {tickLabels.map((t) => <span key={t}>{t}</span>)}
            </PreviewTicks>
            <PreviewBar />
          </PreviewPlot>
        </Group>
      </DialogBody>
      <Footer>
        <WinButton $primary $h={20}>OK</WinButton>
        <WinButton $h={20}>Cancel</WinButton>
        <WinButton $h={20}>Help</WinButton>
      </Footer>
    </Dialog>
  </Desktop>
);

export default App;
